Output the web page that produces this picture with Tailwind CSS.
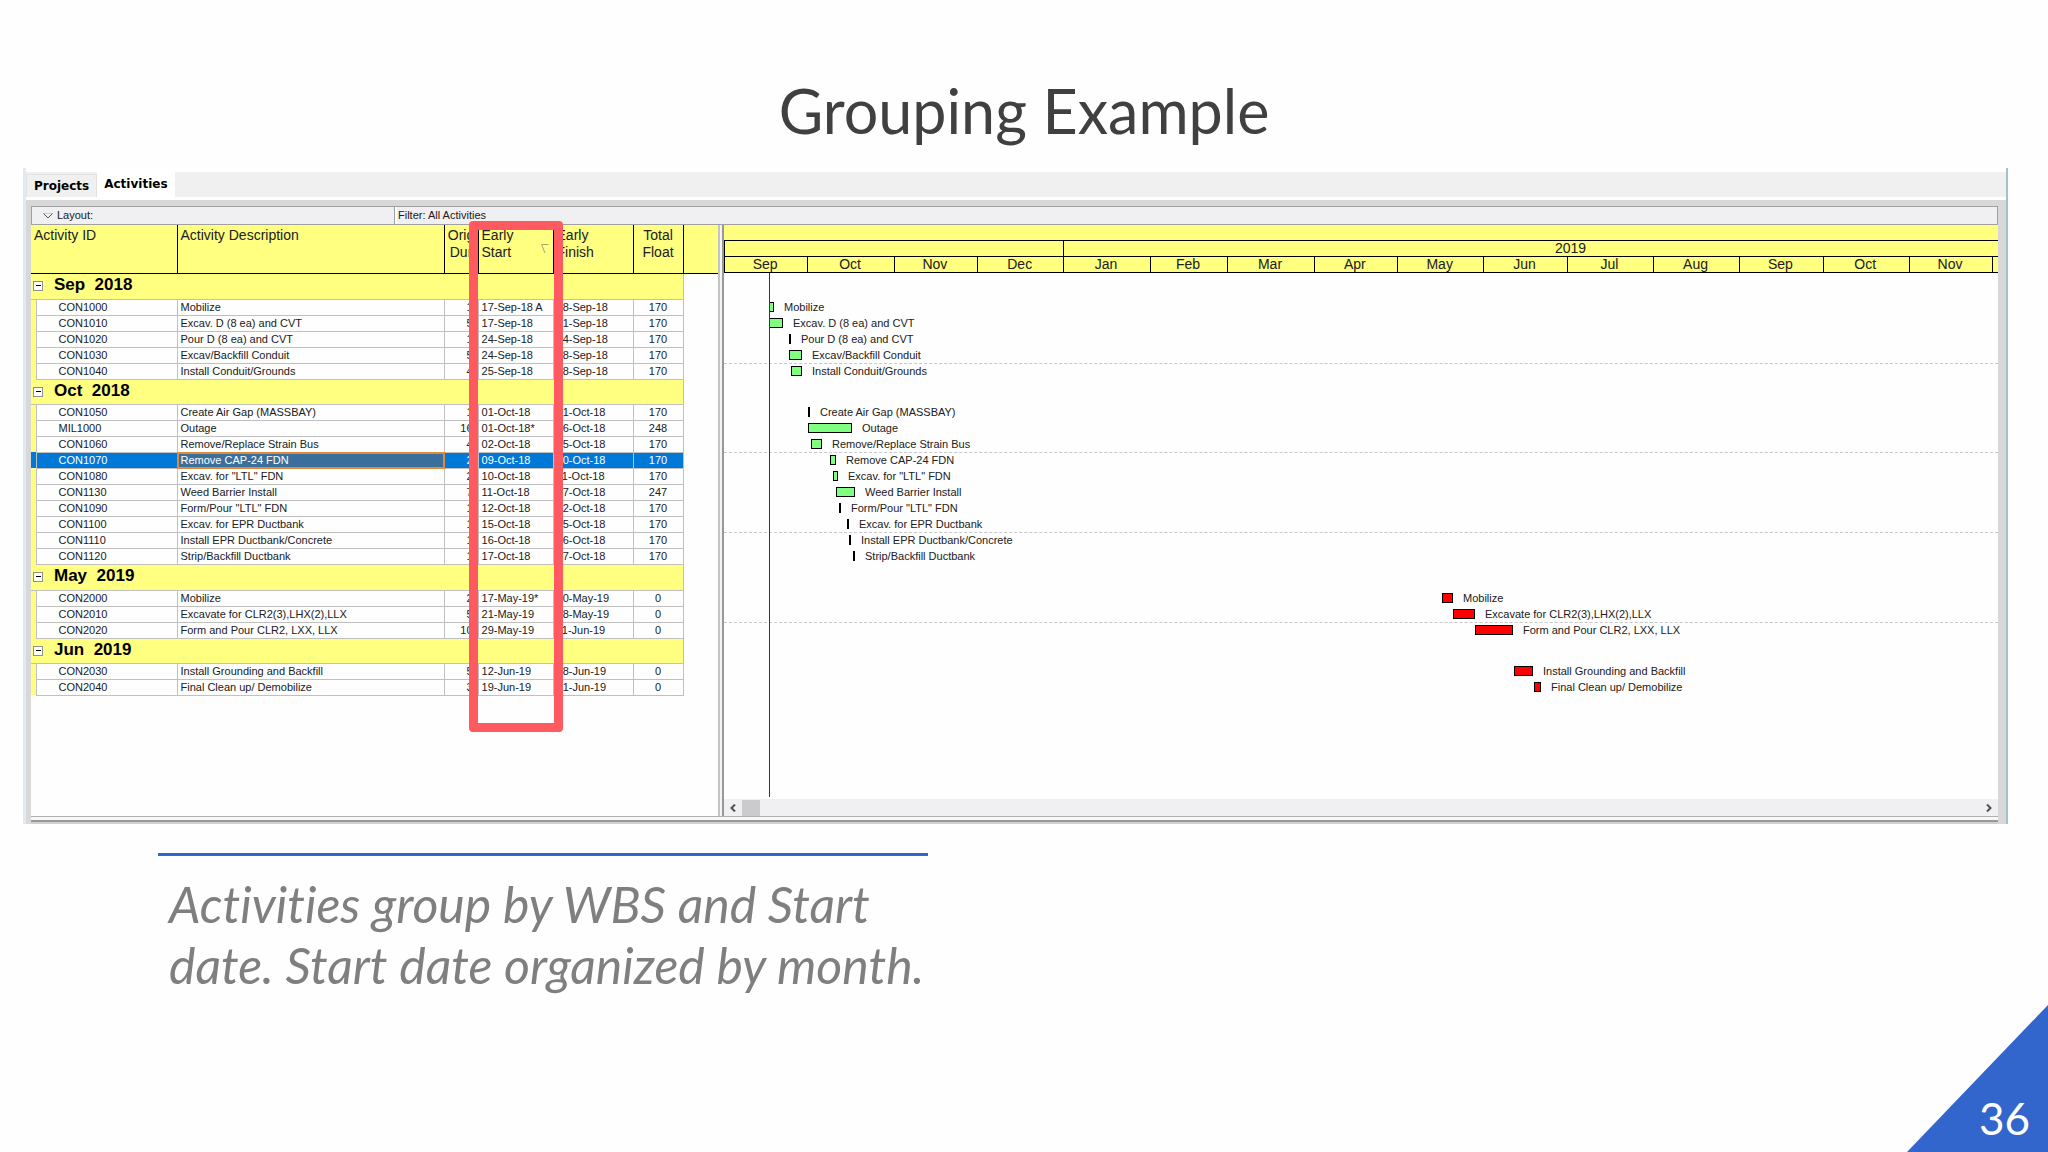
<!DOCTYPE html>
<html lang="en">
  <head>
    <meta charset="UTF-8" />
    <meta name="viewport" content="width=device-width, initial-scale=1.0" />
    <title>Grouping Example</title>
    <script src="https://cdn.jsdelivr.net/npm/@tailwindcss/browser@4"></script>
  </head>
  <body class="bg-[#fefefe] text-[#202020] font-['Liberation_Sans',sans-serif]">
    <div class="relative flex min-h-screen flex-col overflow-hidden">
      <h1 class="flex h-[168px] items-center justify-center pt-[52px] font-['Lato',sans-serif] text-[61px] leading-none text-[#404040]">Grouping Example</h1>

      <!-- Scheduler window -->
      <main class="ml-[23px] mr-[40px] border-l-3 border-r-2 border-l-[#deebf7] border-r-[#a3bfd0] bg-white pt-1">
        <nav class="flex h-[25px] items-end bg-[#f0f0f0] font-['DejaVu_Sans',sans-serif] text-xs font-bold text-black">
          <button class="h-[23px] border border-b-0 border-[#e2e2e2] px-[7px] leading-[20px]">Projects</button>
          <button class="h-[25px] bg-white px-[7px] leading-[23px]">Activities</button>
        </nav>
        <div class="border-t-3 border-white bg-[#d8d8d8] pt-[6px] pr-[8px] pl-[5px]">
          <div class="flex h-[19px] border border-[#a0a0a0] bg-[#f0eff1] text-[11px] leading-[17px]">
            <div class="flex w-[363px] items-center gap-[4px] border-r border-[#a0a0a0] pl-[11px]">
              <svg class="h-[6px] w-[10px]" viewBox="0 0 10 6" fill="none" stroke="#555"><path d="M0.5 0.5 L5 5 L9.5 0.5" /><path d="M1 0.5 H9" stroke="#ccc" /></svg>
              Layout:
            </div>
            <div class="border-l-2 border-white pl-px">Filter: All Activities</div>
          </div>

          <div class="flex min-h-[591px] bg-[#fefefe]">
            <!-- Activity table -->
            <section class="relative w-[687px] shrink-0">
              <table class="w-full table-fixed border-collapse text-[11px]">
                <colgroup>
                  <col class="w-[5px]" />
                  <col class="w-[141px]" />
                  <col class="w-[267px]" />
                  <col class="w-[34px]" />
                  <col class="w-[75px]" />
                  <col class="w-[80px]" />
                  <col class="w-[50px]" />
                  <col class="w-[35px]" />
                </colgroup>
                <thead class="bg-[#ffff80] text-sm leading-[17px]">
                  <tr class="h-[48px] border-b border-black align-top">
                    <th colspan="2" class="border-r border-black pt-[2px] pl-[3px] text-left font-normal">Activity ID</th>
                    <th class="border-r border-black pt-[2px] pl-[3px] text-left font-normal">Activity Description</th>
                    <th class="border-r border-black pt-[2px] text-center font-normal">Orig<br />Dur</th>
                    <th class="relative border-r border-black pt-[2px] pl-[3px] text-left font-normal">
                      Early<br />Start
                      <svg class="absolute right-[4px] top-[19px] h-[10px] w-[8px]" viewBox="0 0 8 10" fill="none" stroke="#a8a870"><path d="M7.5 0.5 H0.5 L4 9" /></svg>
                    </th>
                    <th class="border-r border-black pt-[2px] pl-[3px] text-left font-normal">Early<br />Finish</th>
                    <th class="border-r border-black pt-[2px] text-center font-normal">Total<br />Float</th>
                    <th></th>
                  </tr>
                </thead>
                <tbody id="activities"></tbody>
              </table>
              <!-- Highlight around Early Start -->
              <div class="absolute left-[438px] -top-[4px] h-[511px] w-[94px] rounded-[4px] border-9 border-[#ff5a5f]"></div>
            </section>

            <div class="w-[6px] shrink-0 border-l-2 border-r-2 border-l-[#c4c4c4] border-r-[#989898] bg-[#f4f4f4]"></div>

            <!-- Gantt chart -->
            <section class="flex min-w-0 flex-1 flex-col">
              <div class="bg-[#ffff80] pt-[15px] text-sm leading-[15px]">
                <div id="years" class="flex h-4 overflow-hidden border-t border-black"></div>
                <div id="months" class="flex h-[17px] overflow-hidden border-y border-black"></div>
              </div>
              <div class="relative flex-1">
                <div id="bars"></div>
                <div id="data-date" class="absolute top-0 bottom-[2px] w-px bg-[#2222dd]"></div>
              </div>
              <div class="flex h-[17px] items-center bg-[#f0eff1]">
                <button aria-label="Scroll left" class="flex w-[18px] justify-center">
                  <svg class="h-2 w-[6px]" viewBox="0 0 6 8" fill="none" stroke="#505050" stroke-width="2"><path d="M5 0.5 L1.5 4 L5 7.5" /></svg>
                </button>
                <div class="h-4 w-[18px] bg-[#cbcacc]"></div>
                <button aria-label="Scroll right" class="ml-auto flex w-[18px] justify-center">
                  <svg class="h-2 w-[6px]" viewBox="0 0 6 8" fill="none" stroke="#505050" stroke-width="2"><path d="M1 0.5 L4.5 4 L1 7.5" /></svg>
                </button>
              </div>
            </section>
          </div>
          <div class="h-[8px] border-t border-b-2 border-t-[#b0b0b0] border-b-[#d0d0d0] bg-[#f8f8f8] pt-[3px]">
            <div class="h-[2px] bg-[#989898]"></div>
          </div>
        </div>
      </main>

      <div class="mt-[29px] ml-[158px] w-[770px] border-t-3 border-[#3366cc] pt-[18px] pl-[11px]">
        <p class="font-['Lato',sans-serif] text-[50px] leading-[61px] whitespace-nowrap text-[#7f7f7f] italic [font-variant-ligatures:none]">Activities group by WBS and Start<br />date. Start date organized by month.</p>
      </div>

      <div class="absolute right-0 bottom-0 h-[147px] w-[141px]">
        <svg class="h-full w-full" viewBox="0 0 141 147" preserveAspectRatio="none"><path d="M141 0 V147 H0 Z" fill="#3366cc" /></svg>
        <span class="absolute right-[18px] bottom-[9px] font-['Lato',sans-serif] text-[44px] leading-[50px] text-white">36</span>
      </div>
    </div>

    <script>
      // id, description, duration, start, finish, float, bar start, bar end
      const groups = [
        { name: "Sep  2018", rows: [
          ["CON1000", "Mobilize", 1, "17-Sep-18 A", "18-Sep-18", 170, 45, 50],
          ["CON1010", "Excav. D (8 ea) and CVT", 5, "17-Sep-18", "21-Sep-18", 170, 45, 59],
          ["CON1020", "Pour D (8 ea) and CVT", 1, "24-Sep-18", "24-Sep-18", 170, 65, 67],
          ["CON1030", "Excav/Backfill Conduit", 5, "24-Sep-18", "28-Sep-18", 170, 65, 78],
          ["CON1040", "Install Conduit/Grounds", 4, "25-Sep-18", "28-Sep-18", 170, 67, 78, "line"]
        ]},
        { name: "Oct  2018", rows: [
          ["CON1050", "Create Air Gap (MASSBAY)", 1, "01-Oct-18", "01-Oct-18", 170, 84, 86],
          ["MIL1000", "Outage", 16, "01-Oct-18*", "16-Oct-18", 248, 84, 128],
          ["CON1060", "Remove/Replace Strain Bus", 4, "02-Oct-18", "05-Oct-18", 170, 87, 98],
          ["CON1070", "Remove CAP-24 FDN", 2, "09-Oct-18", "10-Oct-18", 170, 106, 112, "line"],
          ["CON1080", "Excav. for \"LTL\" FDN", 2, "10-Oct-18", "11-Oct-18", 170, 109, 114],
          ["CON1130", "Weed Barrier Install", 7, "11-Oct-18", "17-Oct-18", 247, 112, 131],
          ["CON1090", "Form/Pour \"LTL\" FDN", 1, "12-Oct-18", "12-Oct-18", 170, 115, 117],
          ["CON1100", "Excav. for EPR Ductbank", 1, "15-Oct-18", "15-Oct-18", 170, 123, 125],
          ["CON1110", "Install EPR Ductbank/Concrete", 1, "16-Oct-18", "16-Oct-18", 170, 125, 127, "line"],
          ["CON1120", "Strip/Backfill Ductbank", 1, "17-Oct-18", "17-Oct-18", 170, 129, 131]
        ]},
        { name: "May  2019", late: true, rows: [
          ["CON2000", "Mobilize", 2, "17-May-19*", "20-May-19", 0, 718, 729],
          ["CON2010", "Excavate for CLR2(3),LHX(2),LLX", 5, "21-May-19", "28-May-19", 0, 729, 751],
          ["CON2020", "Form and Pour CLR2, LXX, LLX", 10, "29-May-19", "11-Jun-19", 0, 751, 789, "line"]
        ]},
        { name: "Jun  2019", late: true, rows: [
          ["CON2030", "Install Grounding and Backfill", 5, "12-Jun-19", "18-Jun-19", 0, 790, 809],
          ["CON2040", "Final Clean up/ Demobilize", 3, "19-Jun-19", "21-Jun-19", 0, 810, 817]
        ]}
      ]
      const months = [["Sep", 30], ["Oct", 31], ["Nov", 30], ["Dec", 31], ["Jan", 31], ["Feb", 28], ["Mar", 31], ["Apr", 30],
        ["May", 31], ["Jun", 30], ["Jul", 31], ["Aug", 31], ["Sep", 30], ["Oct", 31], ["Nov", 30], ["", 2]]
      const years = [["", 122], ["2019", 365]]
      const DAYS = 458
      const SPAN = 1274
      const selected = "CON1070"

      const scale = list => list.map(([label, days]) =>
        `<div class="shrink-0 overflow-hidden border-l border-black pr-[2px] text-center" style="width:${days / DAYS * 100}%">${label}</div>`).join("")
      document.getElementById("years").innerHTML = scale(years)
      document.getElementById("months").innerHTML = scale(months)
      document.getElementById("data-date").style.left = `${45 / SPAN * 100}%`

      let table = ""
      let bars = ""
      groups.forEach((group, i) => {
        const height = i % 2 ? "h-[25px]" : "h-[26px]"
        table += `
          <tr class="${height}">
            <td colspan="7" class="border-r border-b border-[#c0c0c0] bg-[#ffff80] p-0 align-top">
              <div class="flex h-[24px] pl-[2px]">
                <button aria-label="Collapse" class="mt-[7px] flex size-[10px] items-center justify-center border border-[#909090] bg-white"><span class="h-px w-[5px] bg-black"></span></button>
                <span class="ml-[11px] text-[17px] leading-[21px] font-bold whitespace-pre text-black">${group.name}</span>
              </div>
            </td>
            <td></td>
          </tr>`
        bars += `<div class="${height}"></div>`
        group.rows.forEach(([id, text, dur, start, finish, float, from, to, line]) => {
          const on = id === selected
          const cell = "border border-[#c0c0c0] p-0"
          table += `
            <tr class="h-4 leading-[15px] whitespace-nowrap ${on ? "bg-[#0078d7] text-white" : ""}">
              <td class="${on ? "" : "bg-[#ffff80]"} p-0"></td>
              <td class="${cell} pl-[22px]">${id}</td>
              <td class="${cell}"><div class="${on ? "bg-[#3a6f9c] pl-[3px] leading-[15px] outline-2 -outline-offset-1 outline-[#e08a3c]" : "pl-[3px]"}">${text}</div></td>
              <td class="${cell} pr-[5px] text-right">${dur}</td>
              <td class="${cell} pl-[3px]">${start}</td>
              <td class="${cell} pl-[3px]">${finish}</td>
              <td class="${cell} text-center">${float}</td>
              <td class="bg-[#fefefe] p-0"></td>
            </tr>`
          bars += `
            <div class="h-4 ${line ? "border-t border-dashed border-[#c8c8c8]" : "border-t border-transparent"}">
              <div class="flex h-[14px] items-center" style="padding-left:${from / SPAN * 100}%">
                <div class="h-[10px] shrink-0 border border-black ${group.late ? "bg-[#ff0000]" : "bg-[#80ff80]"}" style="width:${(to - from) / (SPAN - from) * 100}%"></div>
                <span class="ml-[10px] text-[11px] leading-[14px] whitespace-nowrap">${text}</span>
              </div>
            </div>`
        })
      })
      document.getElementById("activities").innerHTML = table
      document.getElementById("bars").innerHTML = bars
    </script>
  </body>
</html>
